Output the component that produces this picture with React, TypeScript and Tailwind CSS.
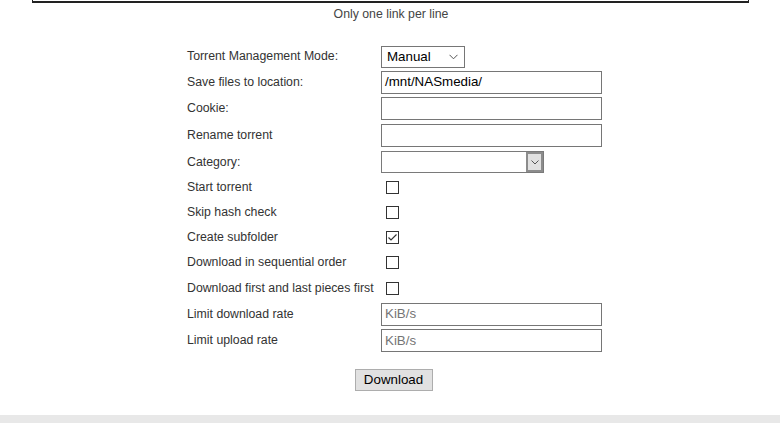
import React from "react";

const Label = ({ children }: { children: React.ReactNode }) => (
  <div className="w-[194px] shrink-0 text-[12.3px] text-[#333] whitespace-nowrap">{children}</div>
);

const TextBox = ({ value, placeholder, w = 221 }: { value?: string; placeholder?: string; w?: number }) => (
  <div
    className="h-[23px] border border-[#767676] bg-white flex items-center px-[3px] text-[13.33px]"
    style={{ width: w }}
  >
    {value ? (
      <span className="text-black">{value}</span>
    ) : placeholder ? (
      <span className="text-[#757575]">{placeholder}</span>
    ) : null}
  </div>
);

const Check = ({ checked }: { checked?: boolean }) => (
  <div className="ml-[5px] w-[13px] h-[13px] border border-[#333] bg-white flex items-center justify-center">
    {checked && (
      <svg width="11" height="11" viewBox="0 0 11 11">
        <path d="M1.5 5.5 L4 8 L9.5 2.5" fill="none" stroke="#333" strokeWidth="1.2" />
      </svg>
    )}
  </div>
);

const Row = ({ h, label, children }: { h: number; label: string; children: React.ReactNode }) => (
  <div className="flex items-center" style={{ height: h }}>
    <Label>{label}</Label>
    <div className="flex items-center">{children}</div>
  </div>
);

export default function App() {
  const font = { fontFamily: '"Liberation Sans", Arial, sans-serif' };
  return (
    <div className="w-[780px] h-[423px] bg-white relative overflow-hidden flex flex-col" style={font}>
      <div className="ml-[32px] w-[717px] h-[3px] border-x border-b-2 border-[#222]" />
      <div className="h-[22px] flex items-center justify-center text-[12.3px] text-[#444] pl-[2px]">
        Only one link per line
      </div>
      <div className="h-[19px]" />
      <div className="ml-[187px] flex flex-col">
        <Row h={25} label="Torrent Management Mode:">
          <div className="w-[84px] h-[22px] border border-[#767676] bg-white flex items-center justify-between pl-[5px] pr-[6px] text-[13.33px] text-black">
            <span>Manual</span>
            <svg width="9" height="6" viewBox="0 0 9 6">
              <path d="M0.5 0.8 L4.5 4.8 L8.5 0.8" fill="none" stroke="#555" strokeWidth="1" />
            </svg>
          </div>
        </Row>
        <Row h={26} label="Save files to location:">
          <TextBox value="/mnt/NASmedia/" />
        </Row>
        <Row h={27} label="Cookie:">
          <TextBox />
        </Row>
        <Row h={27} label="Rename torrent">
          <TextBox />
        </Row>
        <Row h={26} label="Category:">
          <div className="w-[163px] h-[22px] border border-[#7a7a7a] bg-white flex justify-end">
            <div className="w-[17px] h-full border-2 border-[#8c8c8c] bg-[#e1e1e1] flex items-center justify-center">
              <svg width="8" height="5" viewBox="0 0 8 5">
                <path d="M0.5 0.5 L4 4 L7.5 0.5" fill="none" stroke="#555" strokeWidth="1" />
              </svg>
            </div>
          </div>
        </Row>
        <Row h={25} label="Start torrent">
          <Check />
        </Row>
        <Row h={25} label="Skip hash check">
          <Check />
        </Row>
        <Row h={25} label="Create subfolder">
          <Check checked />
        </Row>
        <Row h={25} label="Download in sequential order">
          <Check />
        </Row>
        <Row h={26} label="Download first and last pieces first">
          <Check />
        </Row>
        <Row h={26} label="Limit download rate">
          <TextBox placeholder="KiB/s" />
        </Row>
        <Row h={27} label="Limit upload rate">
          <TextBox placeholder="KiB/s" />
        </Row>
      </div>
      <div className="h-[15px]" />
      <div className="flex justify-center pl-[7px]">
        <div className="w-[78px] h-[22px] border border-[#adadad] bg-[#e1e1e1] flex items-center justify-center text-[13.33px] text-black">
          Download
        </div>
      </div>
      <div className="flex-1" />
      <div className="h-[8px] bg-[#e8e8e8]" />
    </div>
  );
}
